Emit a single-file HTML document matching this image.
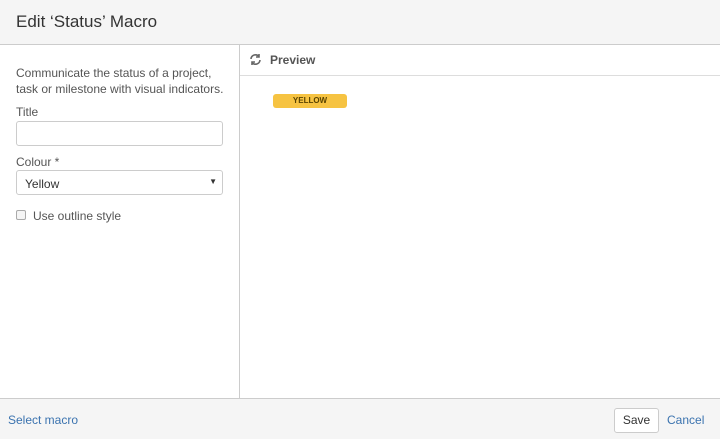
<!DOCTYPE html>
<html><head><style>
*{box-sizing:border-box;margin:0;padding:0}
body{width:720px;height:439px;overflow:hidden;background:#fff;font-family:"Liberation Sans",sans-serif;color:#333;position:relative}
.hdr{position:absolute;left:0;top:0;width:720px;height:45px;background:#f5f5f5;border-bottom:1px solid #ccc}
.hdr h1{position:absolute;left:16px;top:12px;font-size:17px;font-weight:normal;color:#333}
.left{position:absolute;left:0;top:45px;width:240px;height:353px;border-right:1px solid #ccc}
.right{position:absolute;left:240px;top:45px;width:480px;height:353px}
.ph{height:31px;border-bottom:1px solid #ddd;font-size:12px;font-weight:bold;color:#555;padding:8px 0 0 30px;position:relative}
.t{position:absolute;font-size:12px;color:#555}
.inp{position:absolute;left:16px;width:207px;height:25px;border:1px solid #ccc;border-radius:3px;background:#fff}
.ftr{position:absolute;left:0;top:398px;width:720px;height:41px;background:#f5f5f5;border-top:1px solid #ccc}
</style></head><body>
<div class="hdr"><h1>Edit ‘Status’ Macro</h1></div>
<div class="left">
<div class="t" style="left:16px;top:20px;line-height:16px">Communicate the status of a project,<br>task or milestone with visual indicators.</div>
<div class="t" style="left:16px;top:60px">Title</div>
<div class="inp" style="top:76px"></div>
<div class="t" style="left:16px;top:110px">Colour *</div>
<div class="inp" style="top:125px"><span style="position:absolute;left:8px;top:6px;font-size:12px;color:#333">Yellow</span><span style="position:absolute;right:5px;top:6px;font-size:8px;color:#333">▼</span></div>
<div style="position:absolute;left:16px;top:165px;width:10px;height:10px;border:1px solid #aaa;border-radius:2px;background:#f5f5f5"></div>
<div class="t" style="left:33px;top:164px">Use outline style</div>
</div>
<div class="right">
<div class="ph"><svg style="position:absolute;left:9px;top:8px" width="13" height="13" viewBox="0 0 13 13" fill="none" stroke="#666" stroke-width="1.6"><path d="M2 6A4.5 4.5 0 0 1 10 3.5M11 7A4.5 4.5 0 0 1 3 9.5"/><path d="M10 1v3H7M3 12V9h3"/></svg>Preview</div>
<div style="position:absolute;left:33px;top:49px;width:74px;height:14px;background:#f6c342;border-radius:3px;font-size:8px;font-weight:bold;color:#594300;text-align:center;line-height:14px">YELLOW</div>
</div>
<div class="ftr">
<span style="position:absolute;left:8px;top:14px;font-size:12px;color:#3b73af">Select macro</span>
<div style="position:absolute;left:614px;top:9px;width:45px;height:25px;border:1px solid #ccc;border-radius:3px;background:#fff;font-size:12px;text-align:center;line-height:23px;color:#333">Save</div>
<span style="position:absolute;left:667px;top:14px;font-size:12px;color:#3b73af">Cancel</span>
</div>
</body></html>
